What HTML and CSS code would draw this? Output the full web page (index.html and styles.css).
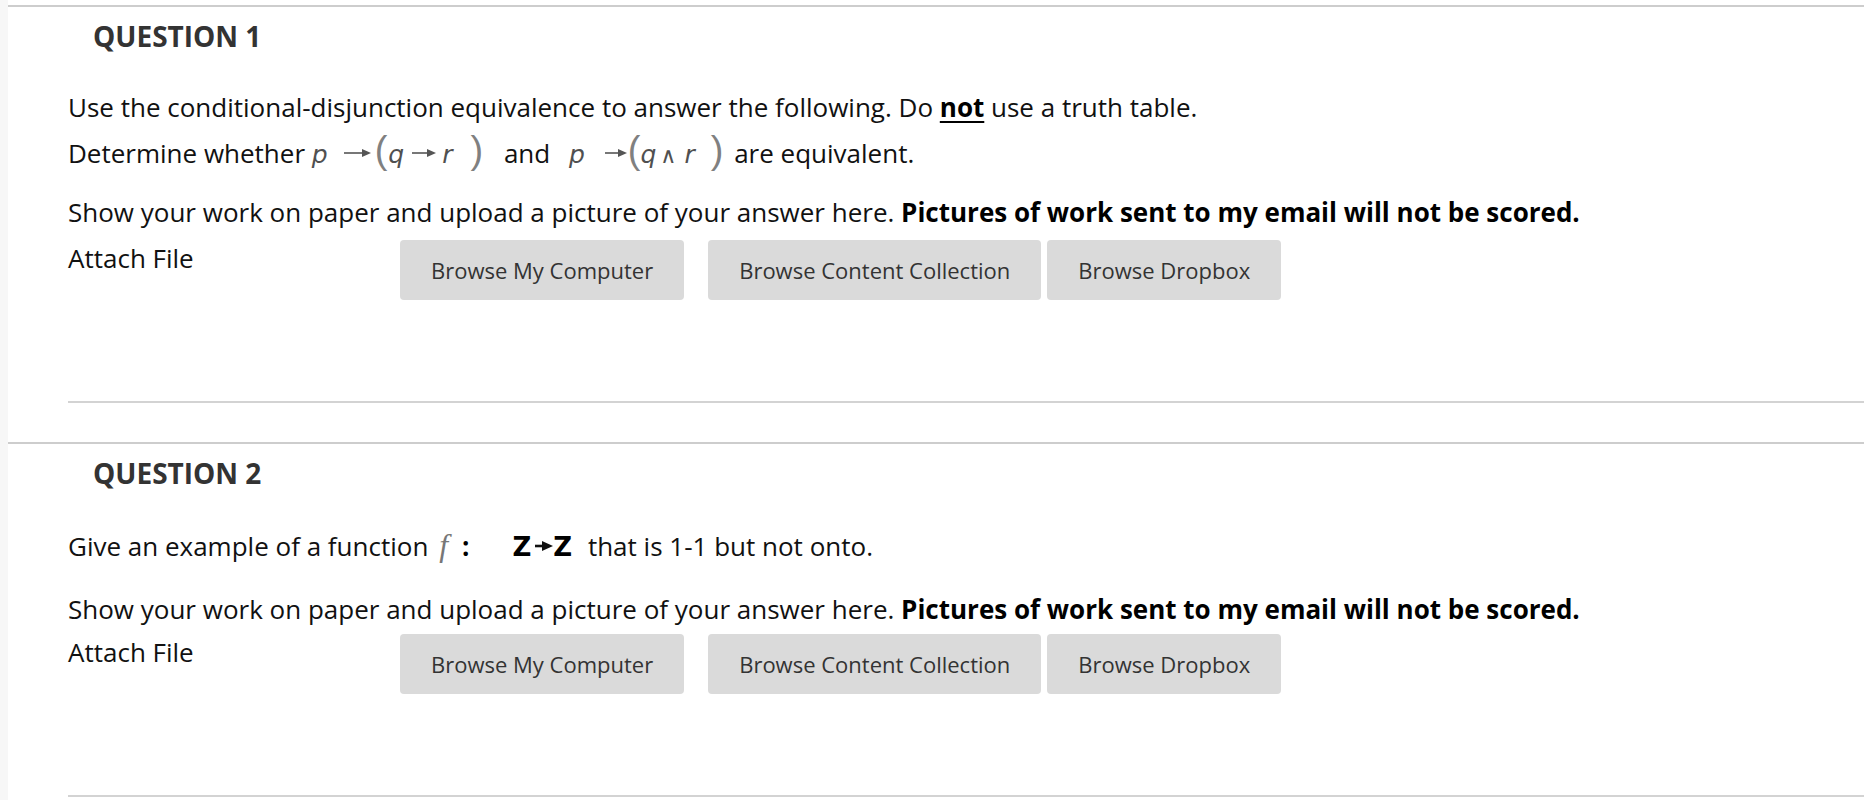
FILE: index.html
```html
<!DOCTYPE html>
<html lang="en">
<head>
<meta charset="utf-8">
<title>Questions</title>
<link rel="stylesheet" href="styles.css">
</head>
<body>
<div class="page">
  <section class="question">
    <h2 class="q-title">QUESTION 1</h2>
    <div class="q-body">
      <p class="q-text">Use the conditional-disjunction equivalence to answer the following. Do <b class="u">not</b> use a truth table.<br>Determine whether <span class="math mr14"><i class="mv">p</i><svg class="arr g16" width="27" height="12" viewBox="0 0 27 12"><line x1="0" y1="6" x2="21" y2="6" stroke="#555" stroke-width="1.6"/><polygon points="18,2 27,6 18,10" fill="#555"/></svg><span class="par g4">(</span><i class="mv g1">q</i><svg class="arr g8" width="24" height="12" viewBox="0 0 24 12"><line x1="0" y1="6" x2="18" y2="6" stroke="#555" stroke-width="1.6"/><polygon points="15,2 24,6 15,10" fill="#555"/></svg><i class="mv g6">r</i><span class="par g18">)</span></span> and <span class="math ml12 mr4"><i class="mv">p</i><svg class="arr g20" width="22" height="12" viewBox="0 0 22 12"><line x1="0" y1="6" x2="16" y2="6" stroke="#555" stroke-width="1.6"/><polygon points="13,2 22,6 13,10" fill="#555"/></svg><span class="par g1">(</span><i class="mv">q</i><span class="wedge g4">&#8743;</span><i class="mv g8">r</i><span class="par g16">)</span></span> are equivalent.</p>
      <p class="q-note">Show your work on paper and upload a picture of your answer here. <b>Pictures of work sent to my email will not be scored.</b></p>
      <div class="attach">
        <span class="attach-label">Attach File</span>
        <div class="attach-btns">
          <button class="btn btn-first" type="button">Browse My Computer</button>
          <button class="btn btn-mid" type="button">Browse Content Collection</button>
          <button class="btn" type="button">Browse Dropbox</button>
        </div>
      </div>
    </div>
  </section>
  <section class="question question-alt">
    <h2 class="q-title">QUESTION 2</h2>
    <div class="q-body">
      <p class="q-text">Give an example of a function <span class="math mr9"><i class="fn g4">f</i><b class="colon g14">:</b><b class="zz g43">Z</b><svg class="arr-b g4" width="18" height="12" viewBox="0 0 18 12"><line x1="0" y1="6" x2="10" y2="6" stroke="#111" stroke-width="2.6"/><polygon points="7,1 18,6 7,11" fill="#111"/></svg><b class="zz">Z</b></span> that is 1-1 but not onto.</p>
      <p class="q-note">Show your work on paper and upload a picture of your answer here. <b>Pictures of work sent to my email will not be scored.</b></p>
      <div class="attach">
        <span class="attach-label">Attach File</span>
        <div class="attach-btns">
          <button class="btn btn-first" type="button">Browse My Computer</button>
          <button class="btn btn-mid" type="button">Browse Content Collection</button>
          <button class="btn" type="button">Browse Dropbox</button>
        </div>
      </div>
    </div>
  </section>
</div>
</body>
</html>
```

FILE: styles.css
```css
html, body {
  margin: 0;
  padding: 0;
  background: #fff;
}

body {
  font-family: "Open Sans", "Liberation Sans", sans-serif;
  color: #111;
}

.page {
  border-left: 8px solid #f7f7f7;
  min-height: 100vh;
  padding-top: 5px;
  box-sizing: border-box;
}

.question {
  border-top: 2px solid #cdcdcd;
  padding-bottom: 39px;
}

.q-title {
  margin: 0;
  padding: 11px 0 0 85px;
  font-size: 28px;
  line-height: 36px;
  font-weight: 700;
  color: #333;
}

.q-body {
  margin-left: 60px;
  border-bottom: 2px solid #d3d3d3;
  padding-bottom: 101px;
}

.q-text {
  margin: 30px 0 0;
  font-size: 26px;
  line-height: 46px;
}

.q-note {
  margin: 13px 0 0;
  font-size: 26px;
  line-height: 46px;
}

.question-alt .q-text {
  line-height: 50px;
}

.question-alt .q-note {
  margin-top: 15px;
}

.question-alt .attach {
  margin-top: 2px;
}

.q-note b,
.q-text b {
  font-weight: 700;
  color: #000;
}

.u {
  text-decoration: underline;
  text-decoration-thickness: 2px;
  text-underline-offset: 4px;
}

/* math */
.math {
  line-height: 0;
  white-space: nowrap;
}

.mv {
  font-family: "DejaVu Sans", sans-serif;
  font-style: italic;
  font-size: 25px;
  color: #505050;
}

.par {
  font-family: "Liberation Sans", sans-serif;
  font-size: 38px;
  color: #808080;
}

.wedge {
  font-family: "DejaVu Sans", sans-serif;
  font-size: 22px;
  color: #505050;
}

.arr {
  vertical-align: 4px;
}

.arr-b {
  vertical-align: 4px;
}

.fn {
  font-family: "Liberation Serif", serif;
  font-style: italic;
  font-size: 32px;
  color: #777;
}

.colon {
  font-weight: 700;
  color: #000;
}

.zz {
  font-family: "DejaVu Sans", sans-serif;
  font-weight: 700;
  font-size: 26px;
  color: #111;
}

.g1 { margin-left: 1px; }
.g4 { margin-left: 4px; }
.g6 { margin-left: 6px; }
.g8 { margin-left: 8px; }
.g14 { margin-left: 14px; }
.g16 { margin-left: 16px; }
.g18 { margin-left: 18px; }
.g20 { margin-left: 20px; }
.g43 { margin-left: 43px; }
.mr14 { margin-right: 14px; }
.mr9 { margin-right: 9px; }
.mr4 { margin-right: 4px; }
.ml12 { margin-left: 12px; }

/* attach row */
.attach {
  display: flex;
  align-items: flex-start;
  margin-top: 5px;
}

.attach-label {
  flex: 0 0 332px;
  padding-top: 2px;
  font-size: 26px;
  line-height: 32px;
  color: #111;
}

.attach-btns {
  display: flex;
}

.btn {
  font-family: "Open Sans", "Liberation Sans", sans-serif;
  font-size: 22px;
  line-height: 30px;
  padding: 15px 31px;
  border: 0;
  border-radius: 4px;
  background: #dadada;
  color: #333;
}

.btn-first {
  margin-right: 24px;
}

.btn-mid {
  margin-right: 6px;
}
```
